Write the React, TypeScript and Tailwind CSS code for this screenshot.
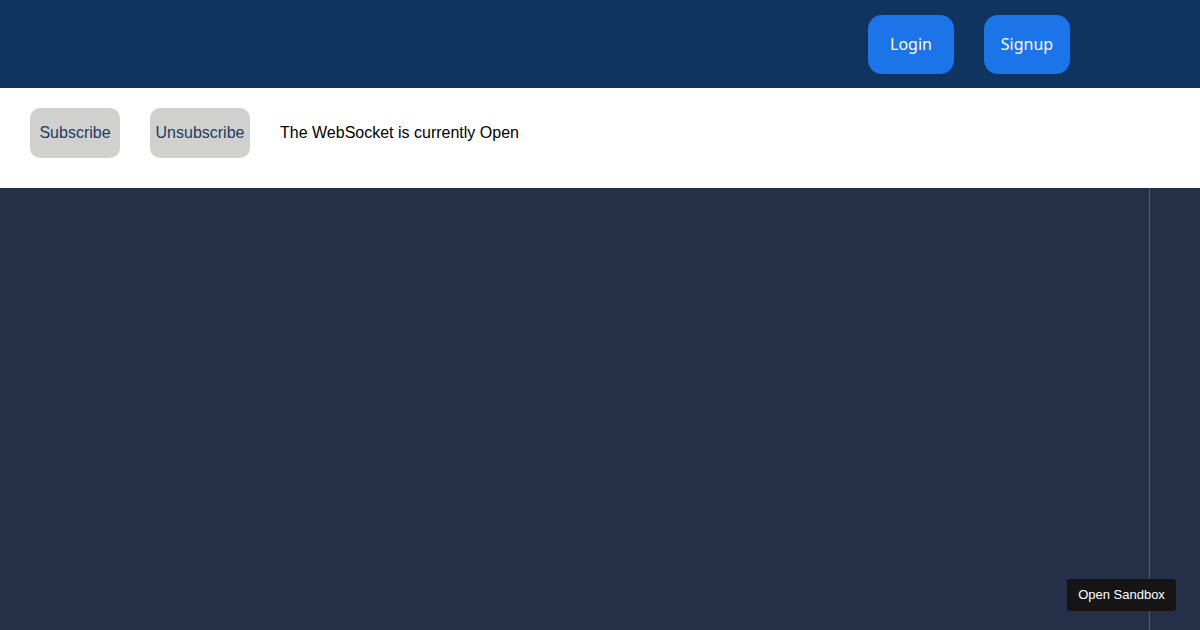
import React from 'react';

export default function App() {
  return (
    <div className="relative h-[630px] w-full overflow-hidden bg-[#253048]">
      {/* top nav */}
      <header className="flex h-[88px] items-center justify-end gap-[30px] bg-[#0f3460] pr-[130px]">
        <button className="h-[59px] w-[86px] rounded-[14px] bg-[#1b74e8] text-[16px] text-white" style={{ fontFamily: '"Noto Sans", sans-serif' }}>
          Login
        </button>
        <button className="h-[59px] w-[86px] rounded-[14px] bg-[#1b74e8] text-[16px] text-white" style={{ fontFamily: '"Noto Sans", sans-serif' }}>
          Signup
        </button>
      </header>

      {/* socket controls */}
      <div className="flex h-[100px] items-center gap-[30px] bg-white pb-[30px] pl-[30px] pt-[20px] font-['Liberation_Sans',sans-serif] text-[16px]">
        <button className="h-[50px] w-[90px] rounded-[10px] bg-[#d0d1cf] text-[#1f3b63]">Subscribe</button>
        <button className="h-[50px] w-[100px] rounded-[10px] bg-[#d0d1cf] text-[#1f3b63]">Unsubscribe</button>
        <span className="text-black">The WebSocket is currently Open</span>
      </div>

      {/* sandbox overlay bits */}
      <div className="absolute bottom-0 left-[1149px] top-[188px] w-px bg-[#4b5a77]" />
      <button className="absolute left-[1067px] top-[579px] h-[32px] w-[109px] rounded-[3px] bg-[#151515] font-['Liberation_Sans',sans-serif] text-[13px] text-white">
        Open Sandbox
      </button>
    </div>
  );
}
